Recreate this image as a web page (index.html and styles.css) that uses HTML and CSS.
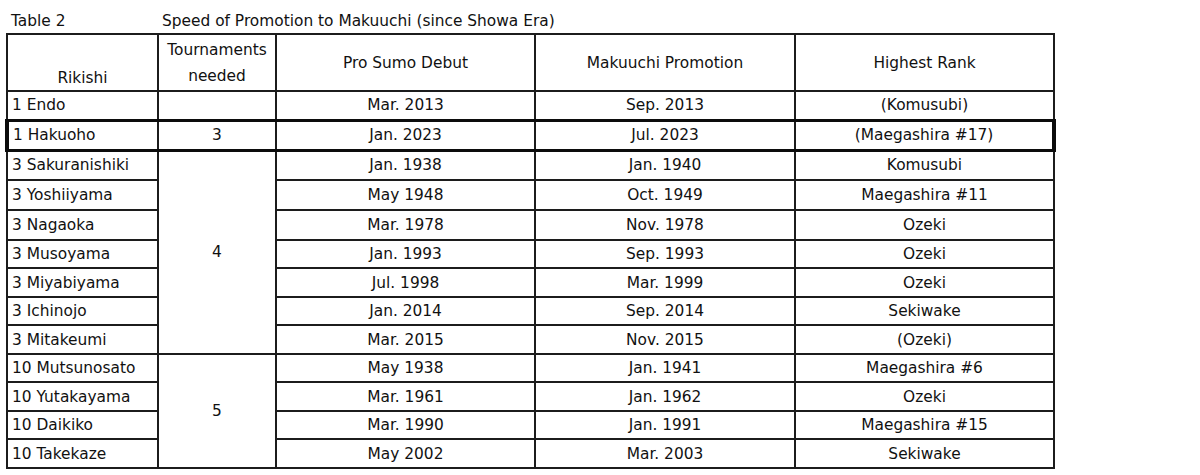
FILE: index.html
```html
<!DOCTYPE html>
<html>
<head>
<meta charset="utf-8">
<link rel="stylesheet" href="styles.css">
</head>
<body>
<div class="caption">
  <span class="cap-label">Table 2</span>
  <span class="cap-title">Speed of Promotion to Makuuchi (since Showa Era)</span>
</div>
<table class="sumo">
  <colgroup>
    <col class="c1"><col class="c2"><col class="c3"><col class="c4"><col class="c5">
  </colgroup>
  <thead>
    <tr class="hdr">
      <th class="bottom">Rikishi</th>
      <th class="top">Tournaments<br>needed</th>
      <th>Pro Sumo Debut</th>
      <th>Makuuchi Promotion</th>
      <th>Highest Rank</th>
    </tr>
  </thead>
  <tbody>
    <tr class="h29"><td class="name">1 Endo</td><td></td><td>Mar. 2013</td><td>Sep. 2013</td><td>(Komusubi)</td></tr>
    <tr class="h30 hi"><td class="name">1 Hakuoho</td><td>3</td><td>Jan. 2023</td><td>Jul. 2023</td><td>(Maegashira #17)</td></tr>
    <tr class="h30"><td class="name">3 Sakuranishiki</td><td rowspan="7">4</td><td>Jan. 1938</td><td>Jan. 1940</td><td>Komusubi</td></tr>
    <tr class="h30"><td class="name">3 Yoshiiyama</td><td>May 1948</td><td>Oct. 1949</td><td>Maegashira #11</td></tr>
    <tr class="h30"><td class="name">3 Nagaoka</td><td>Mar. 1978</td><td>Nov. 1978</td><td>Ozeki</td></tr>
    <tr class="h28"><td class="name">3 Musoyama</td><td>Jan. 1993</td><td>Sep. 1993</td><td>Ozeki</td></tr>
    <tr class="h29"><td class="name">3 Miyabiyama</td><td>Jul. 1998</td><td>Mar. 1999</td><td>Ozeki</td></tr>
    <tr class="h28"><td class="name">3 Ichinojo</td><td>Jan. 2014</td><td>Sep. 2014</td><td>Sekiwake</td></tr>
    <tr class="h29"><td class="name">3 Mitakeumi</td><td>Mar. 2015</td><td>Nov. 2015</td><td>(Ozeki)</td></tr>
    <tr class="h28"><td class="name">10 Mutsunosato</td><td rowspan="4">5</td><td>May 1938</td><td>Jan. 1941</td><td>Maegashira #6</td></tr>
    <tr class="h29"><td class="name">10 Yutakayama</td><td>Mar. 1961</td><td>Jan. 1962</td><td>Ozeki</td></tr>
    <tr class="h28"><td class="name">10 Daikiko</td><td>Mar. 1990</td><td>Jan. 1991</td><td>Maegashira #15</td></tr>
    <tr class="h29"><td class="name">10 Takekaze</td><td>May 2002</td><td>Mar. 2003</td><td>Sekiwake</td></tr>
  </tbody>
</table>
</body>
</html>
```
FILE: styles.css
```css
html, body {
  margin: 0;
  padding: 0;
  background: #ffffff;
}
body {
  font-family: "DejaVu Sans", Verdana, sans-serif;
  font-size: 15.4px;
  color: #111111;
}
.caption {
  display: flex;
  height: 33px;
  align-items: flex-end;
  box-sizing: border-box;
  padding-bottom: 3px;
}
.cap-label {
  width: 151px;
  padding-left: 11px;
}
.cap-title {
  padding-left: 0;
}
.sumo {
  border-collapse: collapse;
  margin-left: 5px;
  table-layout: fixed;
  width: 1047px;
}
.c1 { width: 151px; }
.c2 { width: 118px; }
.c3 { width: 259px; }
.c4 { width: 260px; }
.c5 { width: 259px; }
.sumo th, .sumo td {
  border: 2px solid #1c1c1c;
  padding: 0 4px;
  text-align: center;
  vertical-align: middle;
  font-weight: normal;
  line-height: 18px;
}
.hdr { height: 57px; }
.sumo th.bottom { vertical-align: bottom; padding-bottom: 3px; }
.sumo th.top { line-height: 26px; vertical-align: top; padding-top: 2px; }
.sumo td.name { text-align: left; padding-left: 4px; }
.h28 { height: 28px; }
.h29 { height: 29px; }
.h30 { height: 30px; }
.hi td {
  border-top: 3px solid #0c0c0c;
  border-bottom: 3px solid #0c0c0c;
}
.hi td:first-child { border-left: 4px solid #0c0c0c; }
.hi td:last-child { border-right: 4px solid #0c0c0c; }
```
